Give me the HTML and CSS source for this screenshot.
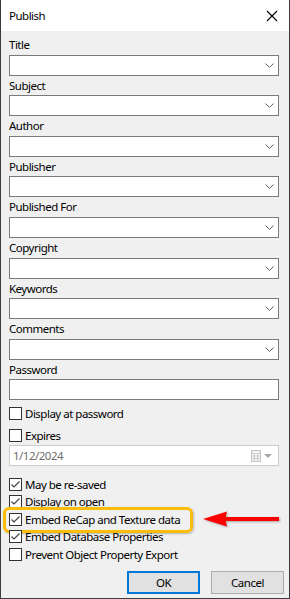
FILE: index.html
```html
<!DOCTYPE html>
<html lang="en">
<head>
    <meta charset="UTF-8">
    <meta name="viewport" content="width=device-width, initial-scale=1.0">
    <title>Publish</title>
    <link rel="stylesheet" href="styles.css">
</head>
<body>
    <div class="window">
        <div class="titlebar">
            <span class="title">Publish</span>
            <svg class="close" width="12" height="12" viewBox="0 0 12 12"><path d="M1 1L11 11M11 1L1 11" stroke="#000" stroke-width="1.1"/></svg>
        </div>

        <div class="content">
            <div class="field">
                <label>Title</label>
                <div class="combo"><svg class="chev" width="9" height="5" viewBox="0 0 9 5"><path d="M0.5 0.5L4.5 4.5L8.5 0.5" fill="none" stroke="#606060"/></svg></div>
            </div>
            <div class="field">
                <label>Subject</label>
                <div class="combo"><svg class="chev" width="9" height="5" viewBox="0 0 9 5"><path d="M0.5 0.5L4.5 4.5L8.5 0.5" fill="none" stroke="#606060"/></svg></div>
            </div>
            <div class="field">
                <label>Author</label>
                <div class="combo"><svg class="chev" width="9" height="5" viewBox="0 0 9 5"><path d="M0.5 0.5L4.5 4.5L8.5 0.5" fill="none" stroke="#606060"/></svg></div>
            </div>
            <div class="field">
                <label>Publisher</label>
                <div class="combo"><svg class="chev" width="9" height="5" viewBox="0 0 9 5"><path d="M0.5 0.5L4.5 4.5L8.5 0.5" fill="none" stroke="#606060"/></svg></div>
            </div>
            <div class="field">
                <label>Published For</label>
                <div class="combo"><svg class="chev" width="9" height="5" viewBox="0 0 9 5"><path d="M0.5 0.5L4.5 4.5L8.5 0.5" fill="none" stroke="#606060"/></svg></div>
            </div>
            <div class="field">
                <label>Copyright</label>
                <div class="combo"><svg class="chev" width="9" height="5" viewBox="0 0 9 5"><path d="M0.5 0.5L4.5 4.5L8.5 0.5" fill="none" stroke="#606060"/></svg></div>
            </div>
            <div class="field">
                <label>Keywords</label>
                <div class="combo"><svg class="chev" width="9" height="5" viewBox="0 0 9 5"><path d="M0.5 0.5L4.5 4.5L8.5 0.5" fill="none" stroke="#606060"/></svg></div>
            </div>
            <div class="field">
                <label>Comments</label>
                <div class="combo"><svg class="chev" width="9" height="5" viewBox="0 0 9 5"><path d="M0.5 0.5L4.5 4.5L8.5 0.5" fill="none" stroke="#606060"/></svg></div>
            </div>
            <div class="field">
                <label>Password</label>
                <div class="textbox"></div>
            </div>

            <div class="check first">
                <span class="box"></span>
                <span>Display at password</span>
            </div>
            <div class="check expires">
                <span class="box"></span>
                <span>Expires</span>
            </div>
            <div class="datebox">
                <span>1/12/2024</span>
                <span class="date-icons">
                    <svg width="10" height="12" viewBox="0 0 10 12"><rect x="0.5" y="0.5" width="9" height="11" fill="#f4f4f4" stroke="#c4c4c4"/><path d="M0.5 3.5H9.5M0.5 6H9.5M0.5 8.5H9.5M3.5 3.5V11.5M6.5 3.5V11.5" stroke="#d0d0d0"/></svg>
                    <svg width="8" height="4" viewBox="0 0 8 4"><path d="M0 0H8L4 4Z" fill="#a8a8a8"/></svg>
                </span>
            </div>

            <div class="options">
                <div class="check">
                    <span class="box"><svg width="11" height="11" viewBox="0 0 11 11"><path d="M1.5 5.5L4 8L9.5 2.5" fill="none" stroke="#444" stroke-width="1.2"/></svg></span>
                    <span>May be re-saved</span>
                </div>
                <div class="check">
                    <span class="box"><svg width="11" height="11" viewBox="0 0 11 11"><path d="M1.5 5.5L4 8L9.5 2.5" fill="none" stroke="#444" stroke-width="1.2"/></svg></span>
                    <span>Display on open</span>
                </div>
                <div class="check marked">
                    <span class="box"><svg width="11" height="11" viewBox="0 0 11 11"><path d="M1.5 5.5L4 8L9.5 2.5" fill="none" stroke="#444" stroke-width="1.2"/></svg></span>
                    <span>Embed ReCap and Texture data</span>
                    <span class="highlight"></span>
                    <svg class="arrow" width="78" height="16" viewBox="0 0 78 16"><path d="M0 8L24 0.5Q21.5 8 24 15.5Z" fill="#ff0000"/><rect x="22" y="6" width="54" height="4" fill="#ff0000"/></svg>
                </div>
                <div class="check">
                    <span class="box"><svg width="11" height="11" viewBox="0 0 11 11"><path d="M1.5 5.5L4 8L9.5 2.5" fill="none" stroke="#444" stroke-width="1.2"/></svg></span>
                    <span>Embed Database Properties</span>
                </div>
                <div class="check">
                    <span class="box"></span>
                    <span>Prevent Object Property Export</span>
                </div>
            </div>

            <div class="buttons">
                <button class="default">OK</button>
                <button>Cancel</button>
            </div>
        </div>
    </div>
</body>
</html>
```

FILE: styles.css
```css
* {
    box-sizing: border-box;
}
body {
    margin: 0;
    font-family: "Noto Sans", "Open Sans", sans-serif;
    font-size: 11.5px;
    letter-spacing: -0.5px;
    color: #000;
}
.window {
    width: 290px;
    height: 599px;
    border: 1px solid #3c3c3c;
    border-top: none;
    display: flex;
    flex-direction: column;
    background-color: #f0f0f0;
}
.titlebar {
    height: 31px;
    background-color: #fff;
    display: flex;
    align-items: center;
    justify-content: space-between;
    padding: 0 11px 0 8px;
}
.title {
    line-height: 16px;
}
.content {
    flex: 1;
    padding: 4px 10px 0 8px;
    position: relative;
}
.field label {
    display: block;
    height: 19.6px;
    line-height: 20px;
}
.combo,
.textbox {
    height: 21px;
    background-color: #fff;
    border: 1px solid #7a7a7a;
    display: flex;
    align-items: center;
    justify-content: flex-end;
    padding-right: 4px;
}
.check {
    height: 17.5px;
    display: flex;
    align-items: center;
    gap: 3px;
    position: relative;
    white-space: nowrap;
}
.check .box {
    width: 13px;
    height: 13px;
    border: 1px solid #333;
    background-color: #fff;
    display: flex;
    align-items: center;
    justify-content: center;
    flex-shrink: 0;
}
.check.first {
    margin-top: 4px;
}
.check.expires {
    margin-top: 5px;
}
.datebox {
    height: 21px;
    margin-top: 1px;
    background-color: #fff;
    border: 1px solid #cccccc;
    color: #6d6d6d;
    display: flex;
    align-items: center;
    justify-content: space-between;
    padding: 0 6px 0 3px;
}
.date-icons {
    display: flex;
    align-items: center;
    gap: 3px;
}
.options {
    margin-top: 9px;
}
.highlight {
    position: absolute;
    left: -6px;
    top: -3px;
    width: 190px;
    height: 26px;
    border: 3px solid #fcbc0c;
    border-radius: 6px;
    box-shadow: 1px 1px 2px rgba(0, 0, 0, 0.25);
}
.arrow {
    position: absolute;
    left: 194px;
    top: 1px;
    filter: drop-shadow(1px 1px 1px rgba(0, 0, 0, 0.3));
}
.buttons {
    display: flex;
    justify-content: flex-end;
    gap: 11px;
    margin: 8px -5px 0 0;
}
button {
    width: 73px;
    height: 23px;
    background-color: #e1e1e1;
    border: 1px solid #adadad;
    font-family: inherit;
    font-size: 11.5px;
    letter-spacing: inherit;
    color: #000;
    padding: 0;
}
button.default {
    border: 2px solid #0078d7;
}
```
